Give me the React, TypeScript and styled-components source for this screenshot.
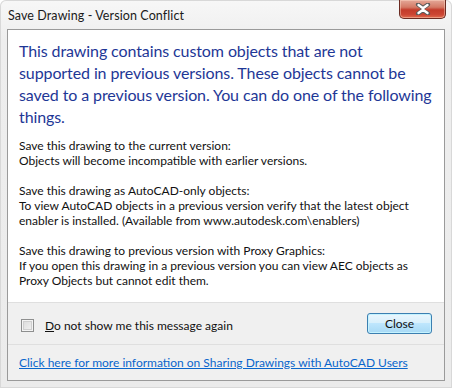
import React from "react";
import styled, { createGlobalStyle } from "styled-components";

const Global = createGlobalStyle`
  html, body { margin: 0; padding: 0; background: #ffffff; }
  body { font-family: Lato, "Liberation Sans", sans-serif; }
`;

const Window = styled.div`
  width: 452px;
  height: 388px;
  box-sizing: border-box;
  background: linear-gradient(#f7f7f7, #eeeeee 40px, #ebebeb);
  border-radius: 6px 6px 0 0;
  display: flex;
  flex-direction: column;
  padding: 0 7px 7px 7px;
  position: relative;
  overflow: hidden;
  box-shadow: inset 0 0 0 1px #d8d8d8;
`;

const TitleBar = styled.div`
  height: 29px;
  display: flex;
  align-items: flex-start;
  justify-content: space-between;
  flex-shrink: 0;
`;

const Title = styled.div`
  font-size: 12.5px;
  color: #1a1a1a;
  margin-top: 8px;
  margin-left: 1px;
  letter-spacing: 0.1px;
`;

const CloseX = styled.div`
  width: 47px;
  height: 19px;
  margin-right: -1px;
  box-sizing: border-box;
  border: 1px solid #6b2b22;
  border-top: none;
  border-radius: 0 0 5px 5px;
  background: linear-gradient(#e4a898 0%, #d47a66 40%, #c33b2a 55%, #cc4533 80%, #e06a4e 100%);
  box-shadow: inset 0 0 0 1px rgba(255, 220, 200, 0.45);
  display: flex;
  align-items: center;
  justify-content: center;
`;

const Client = styled.div`
  flex: 1;
  border: 1px solid #9a9a9a;
  background: #f0f0f0;
  display: flex;
  flex-direction: column;
`;

const Content = styled.div`
  background: #ffffff;
  height: 273px;
  box-sizing: border-box;
  padding: 10px 11px 0 11px;
  border-bottom: 1px solid #dfdfdf;
`;

const MainText = styled.div`
  color: #1e3796;
  font-size: 16px;
  line-height: 22px;
  letter-spacing: -0.1px;
  margin-bottom: 10px;
`;

const Para = styled.p`
  margin: 0 0 15px 0;
  font-size: 12px;
  line-height: 15px;
  color: #111111;
`;

const Footer = styled.div`
  height: 41px;
  display: flex;
  align-items: center;
  justify-content: space-between;
  padding: 0 12px 0 13px;
  border-bottom: 1px solid #dfdfdf;
`;

const CheckLabel = styled.label`
  display: flex;
  align-items: center;
  gap: 11px;
  font-size: 12px;
  color: #111111;
  margin-top: 3px;
`;

const Box = styled.span`
  width: 13px;
  height: 13px;
  box-sizing: border-box;
  border: 1px solid #8e8f8f;
  background: linear-gradient(135deg, #d9d9d9, #f4f4f4);
  box-shadow: inset 0 0 0 1px #f4f4f4, inset 0 0 0 2px #cfcfcf;
`;

const Underline = styled.span`
  text-decoration: underline;
`;

const Button = styled.button`
  width: 65px;
  height: 21px;
  box-sizing: border-box;
  border: 1px solid #3c7fb1;
  border-radius: 3px;
  background: linear-gradient(#eaf6fd 0%, #d9f0fc 45%, #bee6fd 50%, #a7d9f5 100%);
  box-shadow: inset 0 0 0 1px #c5f3ff;
  font-family: Lato, "Liberation Sans", sans-serif;
  font-size: 12px;
  color: #111111;
  padding: 0;
  margin-top: -1px;
`;

const LinkRow = styled.div`
  flex: 1;
  display: flex;
  align-items: center;
  padding: 0 11px;
`;

const Link = styled.a`
  font-size: 12px;
  color: #0a66cc;
  text-decoration: underline;
  cursor: pointer;
  margin-top: -1px;
`;

export default function App() {
  return (
    <>
      <Global />
      <Window>
        <TitleBar>
          <Title>Save Drawing - Version Conflict</Title>
          <CloseX>
            <svg width="18" height="12" viewBox="0 0 18 12">
              <path
                d="M4 1.5 L9 5 L14 1.5 M4 10.5 L9 7 L14 10.5"
                stroke="#5a5a5a"
                strokeWidth="4.2"
                strokeLinecap="round"
                fill="none"
              />
              <path
                d="M4.5 2 L9 5.3 L13.5 2 M4.5 10 L9 6.7 L13.5 10"
                stroke="#ffffff"
                strokeWidth="2.4"
                strokeLinecap="round"
                fill="none"
              />
            </svg>
          </CloseX>
        </TitleBar>
        <Client>
          <Content>
            <MainText>
              This drawing contains custom objects that are not supported in previous versions. These objects
              cannot be saved to a previous version. You can do one of the following things.
            </MainText>
            <Para>
              Save this drawing to the current version:
              <br />
              Objects will become incompatible with earlier versions.
            </Para>
            <Para>
              Save this drawing as AutoCAD-only objects:
              <br />
              To view AutoCAD objects in a previous version verify that the latest object enabler is installed.
              (Available from www.autodesk.com\enablers)
            </Para>
            <Para>
              Save this drawing to previous version with Proxy Graphics:
              <br />
              If you open this drawing in a previous version you can view AEC objects as Proxy Objects but
              cannot edit them.
            </Para>
          </Content>
          <Footer>
            <CheckLabel>
              <Box />
              <span>
                <Underline>D</Underline>o not show me this message again
              </span>
            </CheckLabel>
            <Button>Close</Button>
          </Footer>
          <LinkRow>
            <Link>Click here for more information on Sharing Drawings with AutoCAD Users</Link>
          </LinkRow>
        </Client>
      </Window>
    </>
  );
}
